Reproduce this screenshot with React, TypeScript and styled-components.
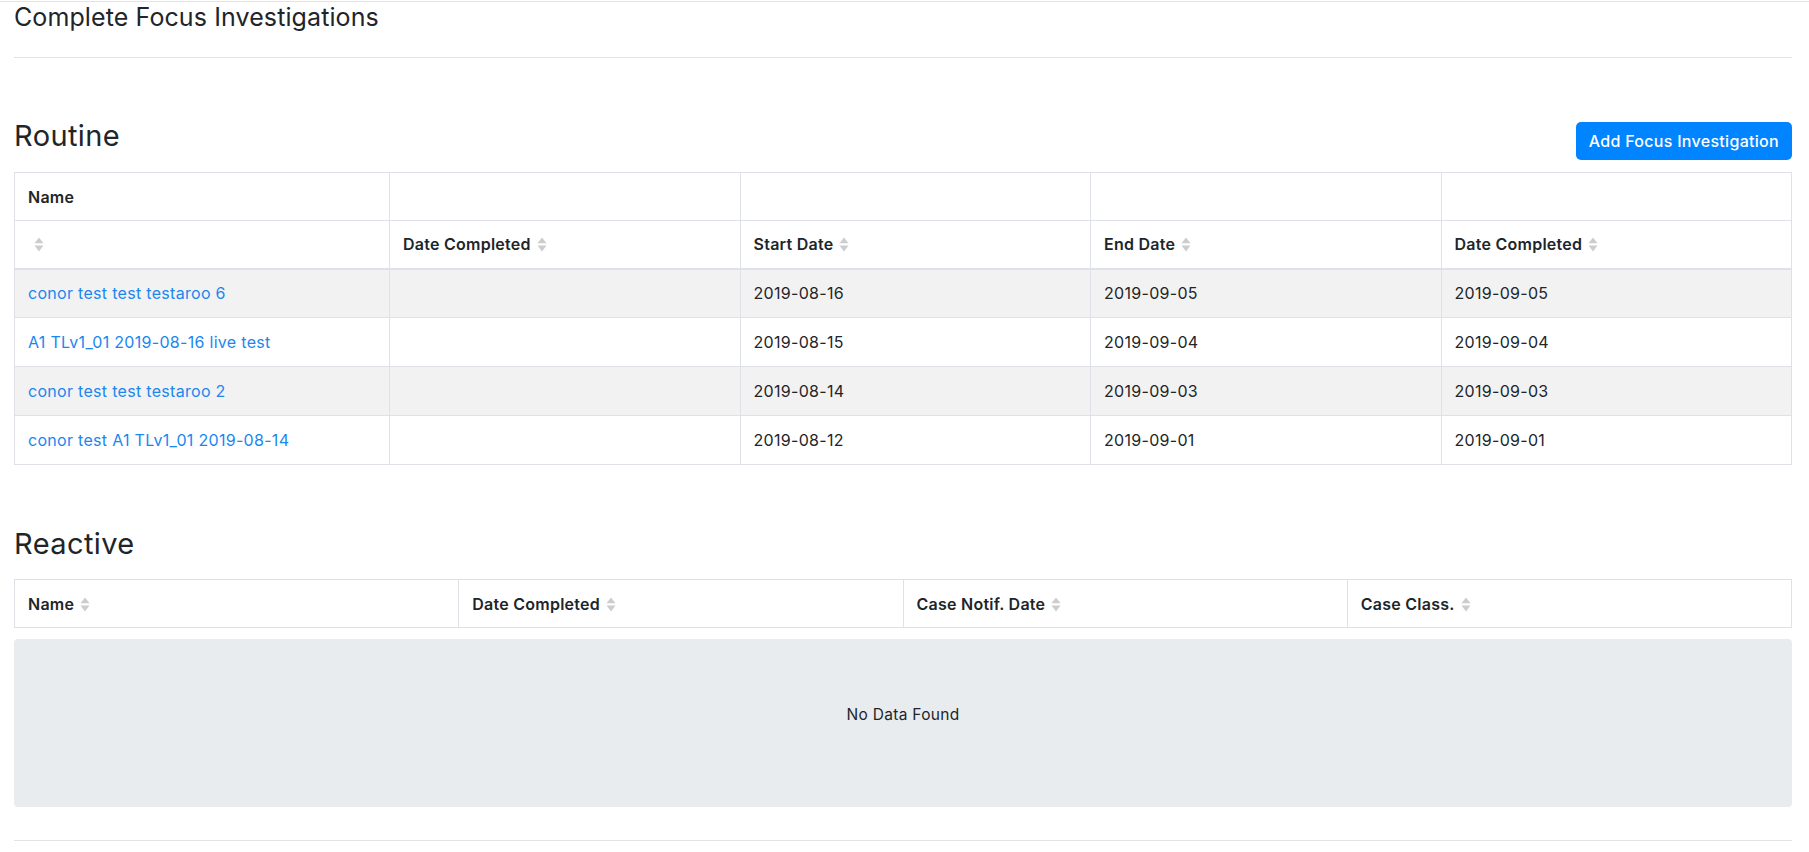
import React from "react";
import styled, { createGlobalStyle } from "styled-components";

const GlobalStyle = createGlobalStyle`
  html, body { margin: 0; padding: 0; background: #ffffff; }
  body {
    font-family: Inter, "Noto Sans", Arial, sans-serif;
    color: #212529;
    -webkit-font-smoothing: antialiased;
  }
  * { box-sizing: border-box; }
`;

const Page = styled.div`
  margin-top: 1px;
  border-top: 1px solid #e3e3e3;
  padding: 0 17px 0 14px;
`;

const PageHeader = styled.header`
  border-bottom: 1px solid #e3e3e3;
  padding-bottom: 25px;
`;

const PageTitle = styled.h1`
  margin: 0;
  font-size: 25px;
  line-height: 30px;
  font-weight: 400;
  color: #212529;
  letter-spacing: 0.1px;
`;

const Section = styled.section<{ $top: number }>`
  margin-top: ${(p) => p.$top}px;
`;

const SectionHeader = styled.div<{ $gap: number }>`
  display: flex;
  justify-content: space-between;
  align-items: flex-end;
  margin-bottom: ${(p) => p.$gap}px;
`;

const SectionTitle = styled.h2<{ $mb: number }>`
  margin: 0 0 ${(p) => p.$mb}px 0;
  font-size: 29px;
  line-height: 34px;
  font-weight: 400;
  letter-spacing: 0.4px;
  color: #212529;
`;

const PrimaryButton = styled.button`
  height: 38px;
  padding: 0 13px;
  border: none;
  border-radius: 5px;
  background: #0084ff;
  color: #ffffff;
  font-family: inherit;
  font-size: 16px;
  font-weight: 500;
  letter-spacing: 0.3px;
  cursor: pointer;
`;

const Table = styled.table`
  width: 100%;
  table-layout: fixed;
  border-collapse: collapse;
  font-size: 16px;
  letter-spacing: 0.3px;
`;

const Col = styled.col<{ $w?: number }>`
  width: ${(p) => (p.$w ? `${p.$w}px` : "auto")};
`;

const HeadRow = styled.tr<{ $last?: boolean }>`
  height: 48px;
  & > th {
    border-bottom: ${(p) => (p.$last ? "2px" : "1px")} solid #dee2e6;
  }
`;

const HeadCell = styled.th`
  border: 1px solid #dee2e6;
  padding: 0 14px 0 13px;
  text-align: left;
  font-weight: 600;
  letter-spacing: 0.25px;
  color: #212529;
  white-space: nowrap;
`;

const BodyRow = styled.tr<{ $striped: boolean }>`
  height: 49px;
  background: ${(p) => (p.$striped ? "#f2f2f2" : "#ffffff")};
`;

const BodyCell = styled.td`
  border: 1px solid #dee2e6;
  padding: 0 14px 0 13px;
  color: #212529;
  white-space: nowrap;
`;

const NameLink = styled.a`
  color: #1a87ef;
  text-decoration: none;
  cursor: pointer;
`;

const SortIcon = styled.svg`
  display: inline-block;
  vertical-align: -2px;
  margin-left: 6px;
`;

const Empty = styled.div`
  margin-top: 11px;
  height: 168px;
  padding-top: 66px;
  border-radius: 4px;
  background: #e9ecef;
  text-align: center;
  font-size: 15.5px;
  line-height: 20px;
  letter-spacing: 0.3px;
  color: #212529;
`;

const FooterRule = styled.div`
  margin-top: 33px;
  border-top: 1px solid #e3e3e3;
`;

const Sort = () => (
  <SortIcon width="10" height="15" viewBox="0 0 10 15" aria-hidden="true">
    <path d="M0.5 6.3 L5 0.5 L9.5 6.3 Z" fill="#cdcdcd" />
    <path d="M0.5 8.4 L9.5 8.4 L5 14.4 Z" fill="#cdcdcd" />
  </SortIcon>
);

const routine = [
  { name: "conor test test testaroo 6", start: "2019-08-16", end: "2019-09-05", done: "2019-09-05" },
  { name: "A1 TLv1_01 2019-08-16 live test", start: "2019-08-15", end: "2019-09-04", done: "2019-09-04" },
  { name: "conor test test testaroo 2", start: "2019-08-14", end: "2019-09-03", done: "2019-09-03" },
  { name: "conor test A1 TLv1_01 2019-08-14", start: "2019-08-12", end: "2019-09-01", done: "2019-09-01" },
];

export default function App() {
  return (
    <>
      <GlobalStyle />
      <Page>
        <PageHeader>
          <PageTitle>Complete Focus Investigations</PageTitle>
        </PageHeader>

        <Section $top={61}>
          <SectionHeader $gap={12}>
            <SectionTitle $mb={7}>Routine</SectionTitle>
            <PrimaryButton>Add Focus Investigation</PrimaryButton>
          </SectionHeader>
          <Table>
            <colgroup>
              <Col $w={375} />
              <Col />
              <Col />
              <Col />
              <Col />
            </colgroup>
            <thead>
              <HeadRow>
                <HeadCell>Name</HeadCell>
                <HeadCell />
                <HeadCell />
                <HeadCell />
                <HeadCell />
              </HeadRow>
              <HeadRow $last>
                <HeadCell>
                  <Sort />
                </HeadCell>
                <HeadCell>
                  Date Completed
                  <Sort />
                </HeadCell>
                <HeadCell>
                  Start Date
                  <Sort />
                </HeadCell>
                <HeadCell>
                  End Date
                  <Sort />
                </HeadCell>
                <HeadCell>
                  Date Completed
                  <Sort />
                </HeadCell>
              </HeadRow>
            </thead>
            <tbody>
              {routine.map((r, i) => (
                <BodyRow key={r.name} $striped={i % 2 === 0}>
                  <BodyCell>
                    <NameLink>{r.name}</NameLink>
                  </BodyCell>
                  <BodyCell />
                  <BodyCell>{r.start}</BodyCell>
                  <BodyCell>{r.end}</BodyCell>
                  <BodyCell>{r.done}</BodyCell>
                </BodyRow>
              ))}
            </tbody>
          </Table>
        </Section>

        <Section $top={62}>
          <SectionHeader $gap={18}>
            <SectionTitle $mb={0}>Reactive</SectionTitle>
          </SectionHeader>
          <Table>
            <thead>
              <HeadRow>
                <HeadCell>
                  Name
                  <Sort />
                </HeadCell>
                <HeadCell>
                  Date Completed
                  <Sort />
                </HeadCell>
                <HeadCell>
                  Case Notif. Date
                  <Sort />
                </HeadCell>
                <HeadCell>
                  Case Class.
                  <Sort />
                </HeadCell>
              </HeadRow>
            </thead>
          </Table>
          <Empty>No Data Found</Empty>
        </Section>

        <FooterRule />
      </Page>
    </>
  );
}
